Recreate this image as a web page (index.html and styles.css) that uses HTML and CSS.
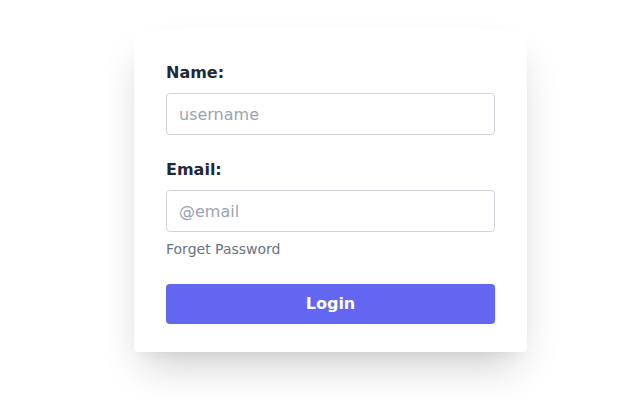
FILE: index.html
```html
<!DOCTYPE html>
<html>
<head>
<meta charset="utf-8">
<link rel="stylesheet" href="styles.css">
</head>
<body>
<div class="page">
  <form class="card">
    <div class="field">
      <label class="label" for="name">Name:</label>
      <input class="input" id="name" type="text" placeholder="username">
    </div>
    <div class="field">
      <label class="label" for="email">Email:</label>
      <input class="input" id="email" type="email" placeholder="@email">
      <a class="forgot" href="#">Forget Password</a>
    </div>
    <button class="btn" type="button">Login</button>
  </form>
</div>
</body>
</html>
```

FILE: styles.css
```css
* { box-sizing: border-box; }
html, body { margin: 0; padding: 0; background: #fff; }
body { font-family: "DejaVu Sans", sans-serif; color: #1f2937; }
.page {
  min-height: 400px;
  padding: 29px 0 0 134px;
}
.card {
  width: 393px;
  background: #fff;
  border-radius: 4px;
  padding: 32px 32px 28px;
  box-shadow: 0 22px 40px -10px rgba(0,0,0,0.2), 0 10px 12px -6px rgba(0,0,0,0.04);
  display: flex;
  flex-direction: column;
}
.field {
  display: flex;
  flex-direction: column;
  margin-bottom: 23px;
}
.label {
  font-size: 16px;
  line-height: 24px;
  font-weight: bold;
  color: #1f2937;
  margin-bottom: 8px;
}
.input {
  width: 100%;
  height: 42px;
  border: 1px solid #d1d5db;
  border-radius: 4px;
  padding: 8px 12px;
  font-family: "DejaVu Sans", sans-serif;
  font-size: 16px;
  line-height: 24px;
  color: #374151;
  outline: none;
}
.input::placeholder { color: #9ca3af; }
.forgot {
  margin-top: 7px;
  margin-bottom: 2px;
  font-size: 14px;
  line-height: 20px;
  color: #6b7280;
  text-decoration: none;
}
.btn {
  width: 100%;
  height: 40px;
  border: none;
  border-radius: 4px;
  background: #6366f1;
  color: #fff;
  font-family: "DejaVu Sans", sans-serif;
  font-size: 16px;
  font-weight: bold;
  line-height: 24px;
}
```
